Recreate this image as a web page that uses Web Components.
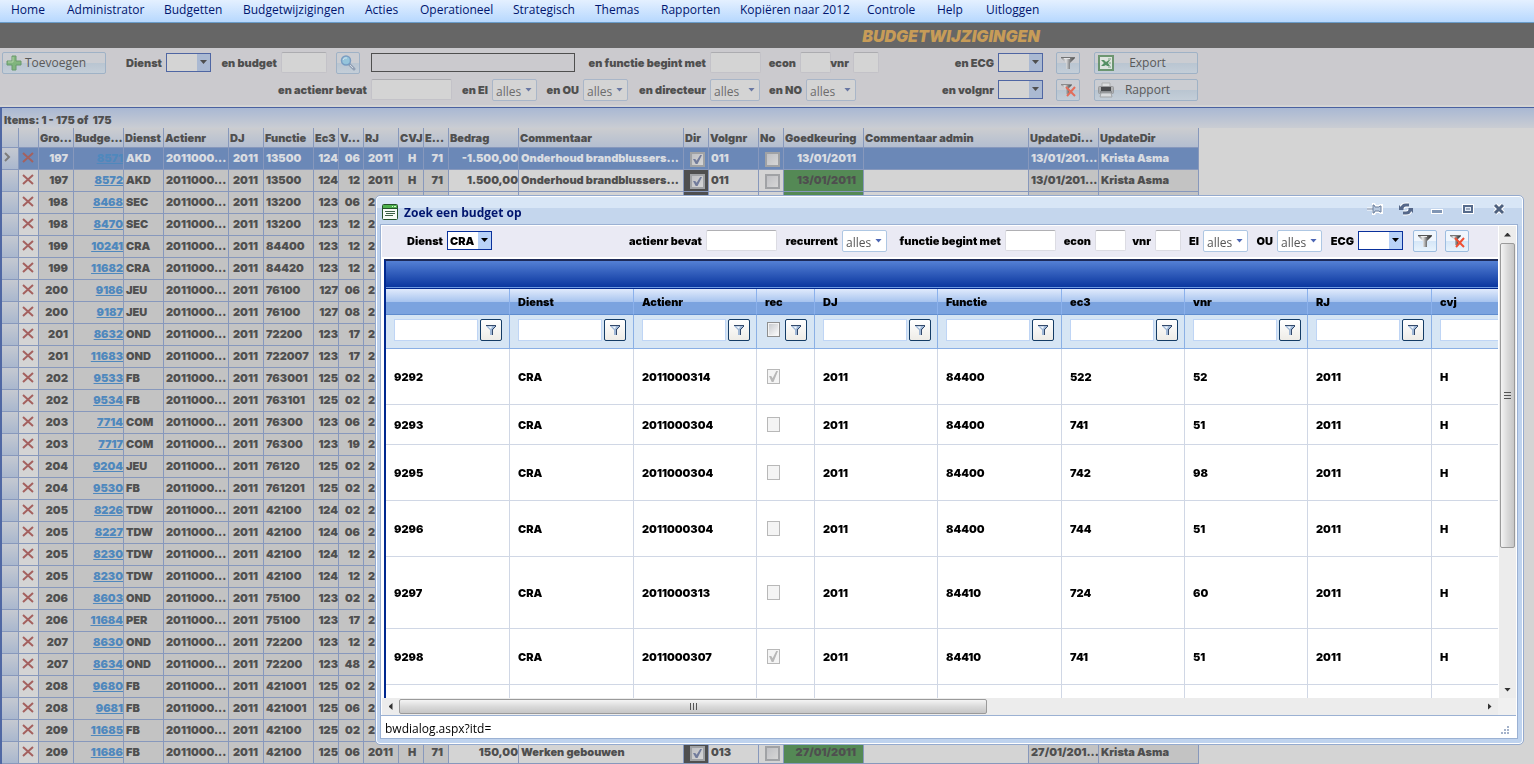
<!DOCTYPE html>
<html lang="nl">
<head>
<meta charset="utf-8">
<title>Budgetwijzigingen</title>
<style>
    html, body { height: 100%; }
    body {
        margin: 0;
        overflow: hidden;
        background: #d4d4d4;
        color: #4f4f4f;
        --black: Inter, "Liberation Sans", sans-serif;
        --ui: "Open Sans", "Noto Sans", sans-serif;
        font: 900 11px/14px var(--black);
    }
    .bar { background: #cbcace; padding: 3px 0 1px 2px; height: 53px; border-bottom: 2px solid #d4d4d4; }
    .row { display: flex; align-items: center; height: 23px; margin-bottom: 4px; }
    .dialog-row { box-sizing: border-box; display: flex; align-items: center; height: 31px; padding-bottom: 2px; background: #eaeaf4; overflow: hidden; }
</style>
</head>
<body>
<main-menu></main-menu>
<page-title>BUDGETWIJZIGINGEN</page-title>
<div class="bar">
    <div class="row">
        <tool-button icon="plus" wide style="--w:104px">Toevoegen</tool-button>
        <form-field label="Dienst" type="select" dim style="--w:105px;--c:45px"></form-field>
        <form-field label="en budget" type="text" dim style="--w:116px;--c:46px"></form-field>
        <tool-button icon="search" title="Zoeken" style="--w:33px"></tool-button>
        <form-field name="Budget" type="readonly" dim style="--w:215px;--c:204px"></form-field>
        <form-field label="en functie begint met" type="text" dim style="--w:186px;--c:51px"></form-field>
        <form-field label="econ" type="text" dim style="--w:70px;--c:31px"></form-field>
        <form-field label="vnr" type="text" dim style="--w:48px;--c:26px"></form-field>
        <form-field label="en ECG" type="select" dim style="--w:164px;--c:45px"></form-field>
        <tool-button icon="funnel" title="Filter" style="--w:37px"></tool-button>
        <tool-button icon="excel" wide center style="--w:118px">Export</tool-button>
    </div>
    <div class="row">
        <form-field label="en actienr bevat" type="text" dim style="--w:450px;--c:81px"></form-field>
        <form-field label="en EI" type="combo" value="alles" dim style="--w:85px;--c:45px"></form-field>
        <form-field label="en OU" type="combo" value="alles" dim style="--w:91px;--c:45px"></form-field>
        <form-field label="en directeur" type="combo" value="alles" dim style="--w:132px;--c:50px"></form-field>
        <form-field label="en NO" type="combo" value="alles" dim style="--w:96px;--c:50px"></form-field>
        <form-field label="en volgnr" type="select" dim style="--w:187px;--c:45px"></form-field>
        <tool-button icon="funnel-off" title="Filter wissen" style="--w:37px"></tool-button>
        <tool-button icon="printer" wide center style="--w:118px">Rapport</tool-button>
    </div>
</div>
<budget-grid></budget-grid>
<dialog-window heading="Zoek een budget op" status="bwdialog.aspx?itd=">
    <div class="dialog-row">
        <form-field label="Dienst" type="select" value="CRA" style="--w:110px;--c:45px"></form-field>
        <form-field label="actienr bevat" type="text" style="--w:285px;--c:71px"></form-field>
        <form-field label="recurrent" type="combo" value="alles" style="--w:110px;--c:45px"></form-field>
        <form-field label="functie begint met" type="text" style="--w:169px;--c:51px"></form-field>
        <form-field label="econ" type="text" style="--w:70px;--c:31px"></form-field>
        <form-field label="vnr" type="text" style="--w:55px;--c:26px"></form-field>
        <form-field label="EI" type="combo" value="alles" style="--w:67px;--c:45px"></form-field>
        <form-field label="OU" type="combo" value="alles" style="--w:74px;--c:45px"></form-field>
        <form-field label="ECG" type="select" style="--w:81px;--c:45px"></form-field>
        <tool-button icon="funnel" title="Filter" bright style="--w:34px"></tool-button>
        <tool-button icon="funnel-off" title="Filter wissen" bright style="--w:32px"></tool-button>
    </div>
    <lookup-grid></lookup-grid>
</dialog-window>

<script>
const STEEL = `
    <defs><linearGradient id="steel">
        <stop offset="0" stop-color="#6b6b6b"/><stop offset=".35" stop-color="#e8e8e8"/><stop offset=".65" stop-color="#666"/><stop offset="1" stop-color="#222"/>
    </linearGradient></defs>`;

const ICONS = {
    plus: `<path d="M6 1h4v5h5v4h-5v5H6v-5H1V6h5z" fill="#6caf61" stroke="#4d8a4c"/><path d="M7 2v5H2" stroke="#a8d29d" fill="none"/>`,
    search: `<path d="M9 9l5 5" stroke="#8292aa" stroke-width="3" stroke-linecap="round"/><path d="M10 10l3 3" stroke="#d7dde6"/>
        <circle cx="6" cy="5.500" r="4.500" fill="#83c2df" stroke="#5f8ebd" stroke-width="1.500"/><path d="M3 5q1-3 4-2" stroke="#d7ecf5" fill="none"/>`,
    funnel: STEEL + `<path d="M1 2h14v1l-5 5v6H6V8L1 3z" fill="url(#steel)"/><path d="M1 2.500h14" stroke="#555"/><path d="M4 3.500h6" stroke="#eee"/>`,
    'funnel-off': STEEL + `<path d="M1 2h11v1L9 6v6H6V7L1 3z" fill="url(#steel)"/><path d="M1 2.500h11" stroke="#777"/>
        <path d="M6 5l9 9M15 5l-8 9" stroke="#ef4f33" stroke-width="2"/>`,
    excel: `<rect x="1" y="1" width="14" height="14" fill="#e6ede4" stroke="#4e8450" stroke-width="2"/>
        <path d="M3 5h3l2 2 3-2h1l-2 3 2 3h-3l-1-1-2 1H3l3-3z" fill="#2f7d40"/><path d="M10 4h3M11 8h2M10 12h3" stroke="#5d9665"/>`,
    printer: `<path d="M4 1h8v5H4z" fill="#e4e4e4" stroke="#a5a5a5"/><rect x="0.500" y="4.500" width="15" height="7" rx="1" fill="#a9a9a9" stroke="#8a8a8a"/>
        <rect x="3" y="5" width="10" height="4" fill="#222"/><path d="M2 10h12" stroke="#555"/><path d="M3 11h10l1 4H2z" fill="#e2e2e2" stroke="#999"/>`,
    window: `<rect x="0.500" y="0.500" width="15" height="15" rx="1" fill="#f7faf5" stroke="#24512a"/><path d="M1 1h14v3H1z" fill="#4db14c"/>
        <path d="M10 2.500h1M12 2.500h2" stroke="#d8f3d0"/><path d="M1 4.500h14" stroke="#24512a"/><path d="M3 7.500h10M4 9.500h9M3 11.500h8" stroke="#3d6047"/>`,
    pin: `<path d="M0 8h5" stroke="#fff" stroke-width="3"/><path d="M5 2h3l1 2h3l1-1h3v10h-3l-1-1H9l-1 2H5z" fill="#fff"/><path d="M0 8h6" stroke="#6b7f9d"/>
        <path d="M6 4h1l1 2h4l1-1h1v6h-1l-1-1H8l-1 2H6z" fill="#b7c8de" stroke="#6b7f9d"/>`,
    refresh: `<g fill="none" stroke="#fff" stroke-width="5"><path d="M4 8q0-4 4-4h3M12 8q0 4-4 4H5"/></g>
        <path d="M4 8q0-4 4-4h3M12 8q0 4-4 4H5" stroke="#55688a" stroke-width="3" fill="none"/><path d="M1 4v5h5zM15 12V7h-5z" fill="#55688a"/>`,
    minimize: `<rect x="2.500" y="8.500" width="11" height="4" fill="#8095b4" stroke="#fff"/>`,
    maximize: `<rect x="2" y="3" width="12" height="10" fill="#fff"/><rect x="4" y="5" width="8" height="6" fill="#e4ecf6" stroke="#566b8c" stroke-width="2"/><path d="M6 8h4" stroke="#566b8c"/>`,
    close: `<path d="M4 4l8 8M12 4l-8 8" stroke="#fff" stroke-width="5"/><path d="M4 4l8 8M12 4l-8 8" stroke="#4e617f" stroke-width="3"/>`,
    delete: `<path d="M3 3l10 9M13 3L3 12" stroke="#a4615f" stroke-width="2"/>`
};

function icon(name) {
    return `<svg width="16" height="16" viewBox="0 0 16 16" aria-hidden="true">${ICONS[name]}</svg>`;
}

// Tick box look shared by both grids
const CHECK_STYLE = `
    input[type=checkbox] {
        appearance: none;
        box-sizing: border-box;
        width: 15px;
        height: 15px;
        margin: 0;
        display: block;
        border: 2px solid var(--tick-edge, #a0a2a5);
        background: linear-gradient(135deg, #bfc0c4, #d6d6d6);
        position: relative;
    }
    input[type=checkbox]:checked::before {
        content: '';
        position: absolute;
        inset: 1px;
        background: var(--tick, #727c9c);
        clip-path: polygon(0 45%, 25% 45%, 40% 65%, 80% 0, 100% 0, 50% 100%, 30% 100%);
    }
`;

class MainMenu extends HTMLElement {
    constructor() {
        super();
        this.attachShadow({ mode: 'open' });
        const items = [
            ['Home', 56], ['Administrator', 97], ['Budgetten', 79], ['Budgetwijzigingen', 122],
            ['Acties', 55], ['Operationeel', 93], ['Strategisch', 82], ['Themas', 66],
            ['Rapporten', 79], ['Kopiëren naar 2012', 127], ['Controle', 70], ['Help', 49], ['Uitloggen', 70]
        ];
        this.shadowRoot.innerHTML = `
            <style>
                :host { display: block; }
                nav {
                    display: flex;
                    height: 22px;
                    padding-left: 11px;
                    background: linear-gradient(#e4f0ff, #b7d8fe);
                    border-bottom: 1px solid #6a9cc9;
                    font: 12px/20px var(--ui);
                    white-space: nowrap;
                }
                a { color: #00156e; text-decoration: none; }
            </style>
            <nav>${items.map(([text, w]) => `<a href="#" style="width:${w}px">${text}</a>`).join('')}</nav>
        `;
    }
}
customElements.define('main-menu', MainMenu);

class PageTitle extends HTMLElement {
    constructor() {
        super();
        this.attachShadow({ mode: 'open' });
        this.shadowRoot.innerHTML = `
            <style>
                :host { display: block; background: #666; }
                h1 {
                    margin: 0;
                    height: 25px;
                    padding-left: 368px;
                    text-align: center;
                    font: italic 900 16px/27px var(--black);
                    color: #c79c58;
                }
            </style>
            <h1><slot></slot></h1>
        `;
    }
}
customElements.define('page-title', PageTitle);

class ToolButton extends HTMLElement {
    connectedCallback() {
        if (this.shadowRoot) return;
        this.attachShadow({ mode: 'open' });
        const title = this.getAttribute('title');
        this.shadowRoot.innerHTML = `
            <style>
                :host { display: flex; flex: none; width: var(--w); justify-content: flex-end; }
                button {
                    box-sizing: border-box;
                    width: 24px;
                    height: 22px;
                    padding: 0;
                    display: flex;
                    align-items: center;
                    justify-content: center;
                    border: 1px solid #9fb2c6;
                    border-radius: 2px;
                    background: linear-gradient(#cbcdd2 50%, #b9c5d1 50%, #c4ced8);
                    color: #595959;
                    font: 12px/20px var(--ui);
                }
                svg { flex: none; opacity: .75; }
                :host([wide]) button { width: 104px; justify-content: flex-start; padding: 0 3px; gap: 3px; }
                :host([center]) span { flex: 1; text-align: center; padding-right: 16px; }
                :host([bright]) svg { opacity: 1; }
                :host([bright]) button {
                    border-color: #9dbde0;
                    background: linear-gradient(#f0f6fd 50%, #d5e6f7 50%, #e8f3fc);
                }
            </style>
            <button type="button"${title ? ` aria-label="${title}"` : ''}>
                ${icon(this.getAttribute('icon'))}${this.hasAttribute('wide') ? '<span><slot></slot></span>' : ''}
            </button>
        `;
    }
}
customElements.define('tool-button', ToolButton);

/*
    Label with its control.
    type: text | readonly | select | combo
*/
class FormField extends HTMLElement {
    connectedCallback() {
        if (this.shadowRoot) return;
        this.attachShadow({ mode: 'open' });
        const type = this.getAttribute('type');
        const label = this.getAttribute('label');
        const value = this.getAttribute('value') || '';
        const name = label ? '' : ` aria-label="${this.getAttribute('name')}"`;
        let control;
        if (type === 'select' || type === 'combo') {
            control = `<span class="${type}"><select id="c"${name}><option>${value}</option></select></span>`;
        } else {
            control = `<input id="c" type="text" class="${type}"${type === 'readonly' ? ' readonly' : ''}${name}>`;
        }
        this.shadowRoot.innerHTML = `
            <style>
                :host {
                    --field: #fff; --edge: #0a319b; --drop: #b9d3f8; --soft: #aec7e3; --ink: #000; --arrow: #4c66b4;
                    display: flex;
                    flex: none;
                    width: var(--w);
                    justify-content: flex-end;
                    align-items: center;
                    gap: 4px;
                    white-space: nowrap;
                    color: var(--ink);
                }
                :host([dim]) {
                    --field: #d4d4d4; --edge: #4f66a3; --drop: #aab9d2; --soft: #a9b6c8; --ink: #4f4f4f; --arrow: #6977a2;
                }
                input, select {
                    box-sizing: border-box;
                    margin: 0;
                    width: 100%;
                    appearance: none;
                    font: inherit;
                    color: inherit;
                    outline: none;
                    border-radius: 0;
                }
                input { width: var(--c); height: 21px; background: var(--field); border: 1px solid #dcdce3; border-top-color: #b0b0b4; border-radius: 2px; }
                :host([dim]) input { border-color: #c3c2c8; border-top-color: #acacb0; }
                input.readonly, :host([dim]) input.readonly { height: 19px; background: transparent; border: 1px solid #4f4f4f; border-radius: 0; }
                span { position: relative; display: block; width: var(--c); }
                span::after {
                    content: '';
                    position: absolute;
                    right: 4px;
                    top: 7px;
                    width: 7px;
                    height: 4px;
                    background: var(--ink);
                    clip-path: polygon(0 0, 100% 0, 50% 100%);
                }
                .select select {
                    height: 19px;
                    padding: 0 2px;
                    border: 1px solid var(--edge);
                    background: linear-gradient(90deg, var(--field) calc(100% - 13px), var(--drop) calc(100% - 13px));
                }
                .combo select {
                    height: 22px;
                    padding: 3px 0 0 3px;
                    border: 1px solid var(--soft);
                    border-radius: 2px;
                    background: var(--field);
                    font: 12px/18px var(--ui);
                    color: #555;
                }
                :host([dim]) .combo select { color: #6c6c6c; }
                .combo::after { right: 5px; top: 9px; background: var(--arrow); }
            </style>
            ${label ? `<label for="c">${label}</label>` : ''}${control}
        `;
    }
}
customElements.define('form-field', FormField);

class BudgetGrid extends HTMLElement {
    constructor() {
        super();
        this.attachShadow({ mode: 'open' });

        const columns = [
            ['', 17], ['', 20], ['Gro...', 35], ['Budge...', 50], ['Dienst', 40], ['Actienr', 65], ['DJ', 35],
            ['Functie', 50], ['Ec3', 25], ['V...', 25], ['RJ', 35], ['CVJ', 25], ['E...', 25], ['Bedrag', 70],
            ['Commentaar', 165], ['Dir', 25], ['Volgnr', 50], ['No', 25], ['Goedkeuring', 80],
            ['Commentaar admin', 165], ['UpdateDi...', 70], ['UpdateDir', 100]
        ];

        // group, budget, dienst, functie, ec3, volgnr
        const rows = [
            [197, 8571, 'AKD', 13500, 124, '06'], [197, 8572, 'AKD', 13500, 124, '12'],
            [198, 8468, 'SEC', 13200, 123, '06'], [198, 8470, 'SEC', 13200, 123, '12'],
            [199, 10241, 'CRA', 84400, 123, '12'], [199, 11682, 'CRA', 84420, 123, '12'],
            [200, 9186, 'JEU', 76100, 127, '06'], [200, 9187, 'JEU', 76100, 127, '08'],
            [201, 8632, 'OND', 72200, 123, '17'], [201, 11683, 'OND', 722007, 123, '17'],
            [202, 9533, 'FB', 763001, 125, '02'], [202, 9534, 'FB', 763101, 125, '02'],
            [203, 7714, 'COM', 76300, 123, '06'], [203, 7717, 'COM', 76300, 123, '19'],
            [204, 9204, 'JEU', 76120, 125, '02'], [204, 9530, 'FB', 761201, 125, '02'],
            [205, 8226, 'TDW', 42100, 124, '02'], [205, 8227, 'TDW', 42100, 124, '06'],
            [205, 8230, 'TDW', 42100, 124, '12'], [205, 8230, 'TDW', 42100, 124, '12'],
            [206, 8603, 'OND', 75100, 123, '02'], [206, 11684, 'PER', 75100, 123, '17'],
            [207, 8630, 'OND', 72200, 123, '12'], [207, 8634, 'OND', 72200, 123, '48'],
            [208, 9680, 'FB', 421001, 125, '02'], [208, 9681, 'FB', 421001, 125, '06'],
            [209, 11685, 'FB', 42100, 125, '02'], [209, 11686, 'FB', 42100, 125, '06']
        ];
        // bedrag, commentaar, volgnr, goedkeuring, update
        const details = {
            0: ['-1.500,00', 'Onderhoud brandblussers...', '011', '13/01/2011', '13/01/201...'],
            1: ['1.500,00', 'Onderhoud brandblussers...', '011', '13/01/2011', '13/01/201...'],
            27: ['150,00', 'Werken gebouwen', '013', '27/01/2011', '27/01/201...']
        };

        const body = rows.map(([group, budget, dienst, functie, ec3, nr], i) => {
            const d = details[i];
            return `<tr${i === 0 ? ' class="selected"' : ''}>
                <td class="handle">${i === 0 ? '<svg width="10" height="10" viewBox="0 0 10 10"><path d="M2 1l4 4-4 4" fill="none" stroke="#7c7c7c" stroke-width="2"/></svg>' : ''}</td>
                <td class="del"><button type="button" aria-label="Verwijderen">${icon('delete')}</button></td>
                <td class="num p5">${group}</td>
                <td class="num"><a href="#">${budget}</a></td>
                <td>${dienst}</td><td>2011000...</td><td class="year">2011</td><td>${functie}</td>
                <td class="num">${ec3}</td><td class="num p3">${nr}</td><td class="year">${d ? '2011' : '2'}</td>
                <td class="mid">${d ? 'H' : ''}</td><td class="num p5">${d ? '71' : ''}</td>
                <td class="num light">${d ? d[0] : ''}</td>
                <td class="light">${d ? d[1] : ''}</td>
                <td class="dir">${d ? '<input type="checkbox" checked aria-label="Dir">' : ''}</td>
                <td class="light">${d ? d[2] : ''}</td>
                <td class="light dir no">${d ? '<input type="checkbox" aria-label="No">' : ''}</td>
                <td class="ok num">${d ? d[3] : ''}</td>
                <td class="light"></td>
                <td>${d ? d[4] : ''}</td><td>${d ? 'Krista Asma' : ''}</td>
            </tr>`;
        }).join('');

        this.shadowRoot.innerHTML = `
            <style>
                :host { display: block; border-top: 1px solid #4a61a0; border-left: 2px solid #5068a4; }
                .items { height: 20px; padding: 5px 0 0 2px; box-sizing: border-box; background: linear-gradient(#a9b8d3, #cacdd3); white-space: pre; }
                table { table-layout: fixed; border-collapse: separate; border-spacing: 0; width: 1197px; }
                th, td {
                    box-sizing: border-box;
                    overflow: hidden;
                    white-space: nowrap;
                    padding: 0 0 0 2px;
                    border-right: 1px solid #8798bc;
                    border-bottom: 1px solid #8798bc;
                }
                th { height: 20px; padding-left: 1px; text-align: left; font-weight: 900; background: linear-gradient(#cccdd0, #b3bed0); }
                td { height: 22px; background: #c3c3c3; padding-bottom: 2px; }
                .handle { background: linear-gradient(#c5c9d1, #a9b7ce); padding: 0 0 4px 1px; }
                .handle svg { display: block; }
                .del { background: #d4d4d4; padding: 0 2px 2px 0; }
                button { display: block; margin: 0 auto; padding: 0; border: 0; background: none; width: 16px; height: 16px; }
                button svg { display: block; }
                .num { text-align: right; padding-left: 0; }
                .year { padding-left: 4px; }
                .p3 { padding-right: 3px; }
                .p5 { padding-right: 5px; }
                .mid { text-align: center; }
                .dir { background: #4f4f4f; padding: 2px 0 0 6px; }
                .light { background: #d4d4d4; }
                .ok { background: #548955; padding-right: 7px; }
                a { color: #4f88bd; }
                .selected td:not(.handle) { background: #6b88b7; color: #d9dce1; }
                ${CHECK_STYLE}
            </style>
            <div class="items">Items: 1 - 175 of  175</div>
            <table>
                <colgroup>${columns.map(c => `<col style="width:${c[1]}px">`).join('')}</colgroup>
                <thead><tr>${columns.map(c => `<th>${c[0]}</th>`).join('')}</tr></thead>
                <tbody>${body}</tbody>
            </table>
        `;
    }
}
customElements.define('budget-grid', BudgetGrid);

class DialogWindow extends HTMLElement {
    constructor() {
        super();
        this.attachShadow({ mode: 'open' });
        const buttons = [['pin', 'Vastzetten'], ['refresh', 'Vernieuwen'], ['minimize', 'Minimaliseren'], ['maximize', 'Maximaliseren'], ['close', 'Sluiten']];
        this.shadowRoot.innerHTML = `
            <style>
                :host {
                    position: fixed;
                    left: 375px;
                    right: 10px;
                    top: 195px;
                    bottom: 19px;
                    display: flex;
                    flex-direction: column;
                    box-sizing: border-box;
                    padding: 0 5px 5px 4px;
                    border: 1px solid #94aace;
                    border-radius: 5px;
                    box-shadow: inset 0 0 0 1px #fff;
                    background: linear-gradient(#d8e6f6 0, #d8e6f6 12px, #c4d6ed 12px, #c4d6ed 30px, #bfd3ee 30px);
                    color: #000;
                }
                header { display: flex; align-items: center; height: 28px; padding: 3px 11px 0 2px; box-sizing: border-box; gap: 6px; flex: none; }
                h2 { margin: 2px 0 0; flex: 1; font: bold 12px/16px var(--ui); color: #00156e; }
                .tools { display: flex; gap: 15px; margin-top: -5px; }
                .tools button { border: 0; padding: 0; background: none; width: 16px; height: 16px; }
                svg { display: block; }
                .frame { flex: 1; min-height: 0; display: flex; flex-direction: column; border: 1px solid #9bb1d3; background: #fff; padding: 1px 1px 0; }
                .view { flex: 1; min-height: 0; display: grid; grid-template: minmax(0, 1fr) 17px / minmax(0, 1fr) 18px; }
                .content { overflow: hidden; }
                .v, .h { display: flex; background: #ececec; }
                .v { flex-direction: column; align-items: center; margin-left: 1px; }
                .thumb { box-sizing: border-box; display: flex; align-items: center; justify-content: center; gap: 2px; border: 1px solid #9a9a9a; border-radius: 2px; }
                .v .thumb { width: 15px; height: 305px; flex-direction: column; background: linear-gradient(90deg, #f4f4f4, #dadada 50%, #c6c6c6); }
                .h .thumb { width: 588px; background: linear-gradient(#f4f4f4, #dadada 50%, #c6c6c6); margin: 1px 0; }
                .thumb i { background: #555; }
                .v i { width: 7px; height: 1px; }
                .h i { width: 1px; height: 7px; }
                .arrow { flex: none; width: 17px; height: 17px; border: 0; padding: 0; background: none; display: flex; align-items: center; justify-content: center; }
                .arrow::before { content: ''; width: 7px; height: 4px; background: #333; clip-path: polygon(50% 0, 100% 100%, 0 100%); }
                .down { margin-top: auto; }
                .down::before { clip-path: polygon(0 0, 100% 0, 50% 100%); }
                .left::before, .right::before { width: 4px; height: 7px; clip-path: polygon(100% 0, 100% 100%, 0 50%); }
                .right::before { clip-path: polygon(0 0, 100% 50%, 0 100%); }
                .right { margin-left: auto; }
                .corner { background: #f0f0f0; }
                footer { flex: none; display: flex; justify-content: space-between; align-items: flex-end; height: 22px; margin-left: -1px; padding: 0 6px 0 4px; border-top: 1px solid #9bb1d3; font: 12px/20px var(--ui); }
                footer span { align-self: center; padding-top: 4px; }
            </style>
            <header>
                ${icon('window')}<h2></h2>
                <div class="tools">${buttons.map(b => `<button type="button" aria-label="${b[1]}">${icon(b[0])}</button>`).join('')}</div>
            </header>
            <div class="frame">
                <div class="view">
                    <div class="content"><slot></slot></div>
                    <div class="v"><button class="arrow up" aria-label="Omhoog"></button><div class="thumb"><i></i><i></i><i></i></div><button class="arrow down" aria-label="Omlaag"></button></div>
                    <div class="h"><button class="arrow left" aria-label="Links"></button><div class="thumb"><i></i><i></i><i></i></div><button class="arrow right" aria-label="Rechts"></button></div>
                    <div class="corner"></div>
                </div>
                <footer>
                    <span></span>
                    <svg width="10" height="12" viewBox="0 0 10 12"><path d="M7 1h2M7 4h2M4 4h2M7 7h2M4 7h2M1 7h2" stroke="#a5b3cb" stroke-width="2"/></svg>
                </footer>
            </div>
        `;
        this.shadowRoot.querySelector('h2').textContent = this.getAttribute('heading');
        this.shadowRoot.querySelector('footer span').textContent = this.getAttribute('status');
    }
}
customElements.define('dialog-window', DialogWindow);

class LookupGrid extends HTMLElement {
    constructor() {
        super();
        this.attachShadow({ mode: 'open' });
        const columns = [
            ['', 124], ['Dienst', 124], ['Actienr', 123], ['rec', 58], ['DJ', 123],
            ['Functie', 124], ['ec3', 123], ['vnr', 123], ['RJ', 124], ['cvj', 123]
        ];
        // id, actienr, rec, functie, ec3, vnr, row height
        const rows = [
            [9292, 2011000314, true, 84400, 522, 52, 56],
            [9293, 2011000304, false, 84400, 741, 51, 40],
            [9295, 2011000304, false, 84400, 742, 98, 56],
            [9296, 2011000304, false, 84400, 744, 51, 56],
            [9297, 2011000313, false, 84410, 724, 60, 72],
            [9298, 2011000307, true, 84410, 741, 51, 56]
        ];
        const funnel = `<svg width="12" height="12" viewBox="0 0 12 12"><path d="M1 1h10v1L8 6v5H5V6L1 2z" fill="#9fb7d6"/><path d="M1 1.500h10M7.500 5v6M8 5l3-3" stroke="#33496b" fill="none"/><path d="M3 2.500h4L6 5" fill="#f4f8fc"/></svg>`;
        const filters = columns.map(([name]) => `
            <td><div class="filter">
                <input type="${name === 'rec' ? 'checkbox' : 'text'}" aria-label="Filter ${name || 'nummer'}">
                <button type="button" aria-label="Filter op ${name || 'nummer'}">${funnel}</button>
            </div></td>`).join('');
        const body = rows.map(([id, actie, rec, functie, ec3, vnr, h]) => `
            <tr style="height:${h}px">
                <td>${id}</td><td>CRA</td><td>${actie}</td>
                <td><input type="checkbox"${rec ? ' checked' : ''} disabled aria-label="rec"></td>
                <td>2011</td><td>${functie}</td><td>${ec3}</td><td>${vnr}</td><td>2011</td><td>H</td>
            </tr>`).join('');

        this.shadowRoot.innerHTML = `
            <style>
                :host { display: block; margin: 2px 0 0 2px; border-top: 2px solid #1d2a58; border-left: 2px solid #00288f; }
                .band { height: 26px; background: linear-gradient(#5480d4, #0a369f); border-bottom: 1px solid #6f9be3; }
                .band + div { height: 1px; background: #00288f; }
                table { table-layout: fixed; border-collapse: separate; border-spacing: 0; width: 1149px; }
                th, td {
                    box-sizing: border-box;
                    text-align: left;
                    padding: 0 0 0 8px;
                    border-right: 1px solid #d0d7e5;
                    border-bottom: 1px solid #d0d7e5;
                }
                th {
                    height: 26px;
                    font-weight: 900;
                    background: linear-gradient(#e0eafc, #a9c5ef 50%, #7ba3df 50%);
                    border-color: #8bb1ec #8bb1ec #5f8cce;
                }
                thead td { height: 34px; background: #d6e5f4; border-color: #8bb0e5; }
                .filter { display: flex; align-items: center; gap: 2px; padding-bottom: 4px; }
                .filter input[type=text] { box-sizing: border-box; width: 84px; height: 22px; margin: 0; border: 1px solid #bfd5f5; background: #fff; }
                button { box-sizing: border-box; width: 22px; height: 22px; padding: 0; border: 1px solid #143c66; border-radius: 2px; background: linear-gradient(#fff, #eeece7); display: flex; align-items: center; justify-content: center; }
                ${CHECK_STYLE}
                input[type=checkbox] { width: 13px; margin-left: 2px; border-width: 1px; --tick-edge: #b8b8b8; --tick: #b8b8b8; background: #f4f4f4; }
                .filter input[type=checkbox] { margin-right: 3px; --tick-edge: #8e8f8f; background: linear-gradient(135deg, #c3c6ca, #fff); box-shadow: inset 0 0 0 1px #f4f4f4; }
            </style>
            <div class="band"></div><div></div>
            <table>
                <colgroup>${columns.map(c => `<col style="width:${c[1]}px">`).join('')}</colgroup>
                <thead>
                    <tr>${columns.map(c => `<th>${c[0]}</th>`).join('')}</tr>
                    <tr>${filters}</tr>
                </thead>
                <tbody>${body}<tr style="height:40px">${'<td></td>'.repeat(10)}</tr></tbody>
            </table>
        `;
    }
}
customElements.define('lookup-grid', LookupGrid);
</script>
</body>
</html>
